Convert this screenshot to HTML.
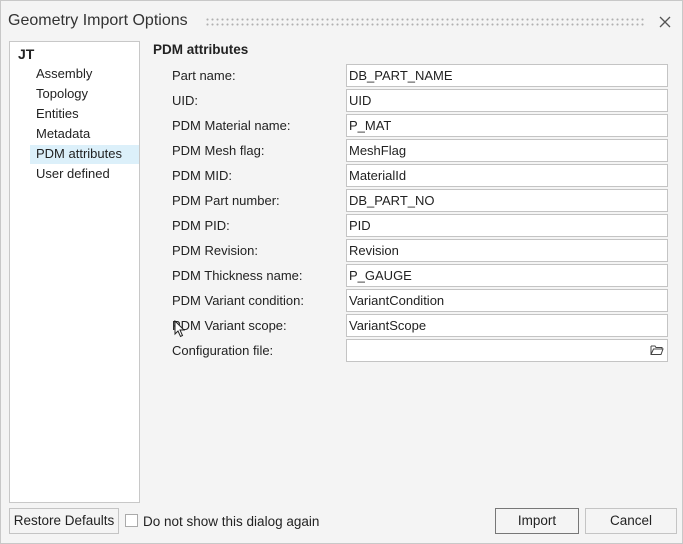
<!DOCTYPE html>
<html><head><style>
*{box-sizing:border-box;margin:0;padding:0}
body{width:683px;height:544px;background:#f4f4f4;font-family:"Liberation Sans",sans-serif;font-size:13px;color:#222;position:relative;overflow:hidden}
.frame{position:absolute;left:0;top:0;width:683px;height:544px;border:1px solid #c8c8c8}
.abs{position:absolute;white-space:nowrap}
.title{left:8px;top:12px;font-size:16px;color:#333}
.grip{left:205px;top:17px;width:440px;height:10px;background-image:radial-gradient(circle,#b0b0b0 0.9px,transparent 1.2px);background-size:5px 5px}
.left{position:absolute;left:9px;top:41px;width:131px;height:462px;background:#fff;border:1px solid #c8c8c8}
.li{position:absolute;left:26px;white-space:nowrap}
.sel{position:absolute;left:20px;top:103px;width:109px;height:19px;background:#dcf0fa}
.lbl{left:172px}
.inp{position:absolute;left:346px;width:322px;height:23px;background:#fff;border:1px solid #c4c4c4;padding:3px 0 0 2px}
.btn{position:absolute;top:508px;height:26px;border:1px solid #c4c4c4;background:#f4f4f4;text-align:center;line-height:24px;font-size:13.5px}
</style></head><body>
<div class="frame"></div>
<div class="abs title">Geometry Import Options</div>
<div class="abs grip"></div>
<svg class="abs" style="left:659px;top:16px" width="12" height="12"><path d="M1 1L11 11M11 1L1 11" stroke="#555" stroke-width="1.3"/></svg>
<div class="left">
<div class="sel"></div>
<div class="abs" style="left:8px;top:4px;font-weight:bold;font-size:14px">JT</div>
<div class="li" style="top:24px">Assembly</div>
<div class="li" style="top:44px">Topology</div>
<div class="li" style="top:64px">Entities</div>
<div class="li" style="top:84px">Metadata</div>
<div class="li" style="top:104px">PDM attributes</div>
<div class="li" style="top:124px">User defined</div>
</div>
<div class="abs" style="left:153px;top:42px;font-weight:bold;font-size:13.5px">PDM attributes</div>
<div class="abs lbl" style="top:68px">Part name:</div><div class="inp" style="top:64px">DB_PART_NAME</div>
<div class="abs lbl" style="top:93px">UID:</div><div class="inp" style="top:89px">UID</div>
<div class="abs lbl" style="top:118px">PDM Material name:</div><div class="inp" style="top:114px">P_MAT</div>
<div class="abs lbl" style="top:143px">PDM Mesh flag:</div><div class="inp" style="top:139px">MeshFlag</div>
<div class="abs lbl" style="top:168px">PDM MID:</div><div class="inp" style="top:164px">MaterialId</div>
<div class="abs lbl" style="top:193px">PDM Part number:</div><div class="inp" style="top:189px">DB_PART_NO</div>
<div class="abs lbl" style="top:218px">PDM PID:</div><div class="inp" style="top:214px">PID</div>
<div class="abs lbl" style="top:243px">PDM Revision:</div><div class="inp" style="top:239px">Revision</div>
<div class="abs lbl" style="top:268px">PDM Thickness name:</div><div class="inp" style="top:264px">P_GAUGE</div>
<div class="abs lbl" style="top:293px">PDM Variant condition:</div><div class="inp" style="top:289px">VariantCondition</div>
<div class="abs lbl" style="top:318px">PDM Variant scope:</div><div class="inp" style="top:314px">VariantScope</div>
<div class="abs lbl" style="top:343px">Configuration file:</div><div class="inp" style="top:339px"></div>
<svg class="abs" style="left:650px;top:344px" width="14" height="12"><path d="M1 2H5L6 3.5H12V5M1 2V10.5H11L13 5H3.5L1 10.5" fill="none" stroke="#444" stroke-width="1"/></svg>
<svg class="abs" style="left:174px;top:320px" width="12" height="18"><path d="M1 1V14L4 11L6.5 16.5L8.5 15.5L6 10H10Z" fill="#fff" stroke="#222" stroke-width="1"/></svg>
<div class="btn" style="left:9px;width:110px">Restore Defaults</div>
<div class="abs" style="left:125px;top:514px;width:13px;height:13px;border:1px solid #aaa;background:#fff"></div>
<div class="abs" style="left:143px;top:514px;font-size:13.5px">Do not show this dialog again</div>
<div class="btn" style="left:495px;width:84px;border-color:#777">Import</div>
<div class="btn" style="left:585px;width:92px">Cancel</div>
</body></html>
